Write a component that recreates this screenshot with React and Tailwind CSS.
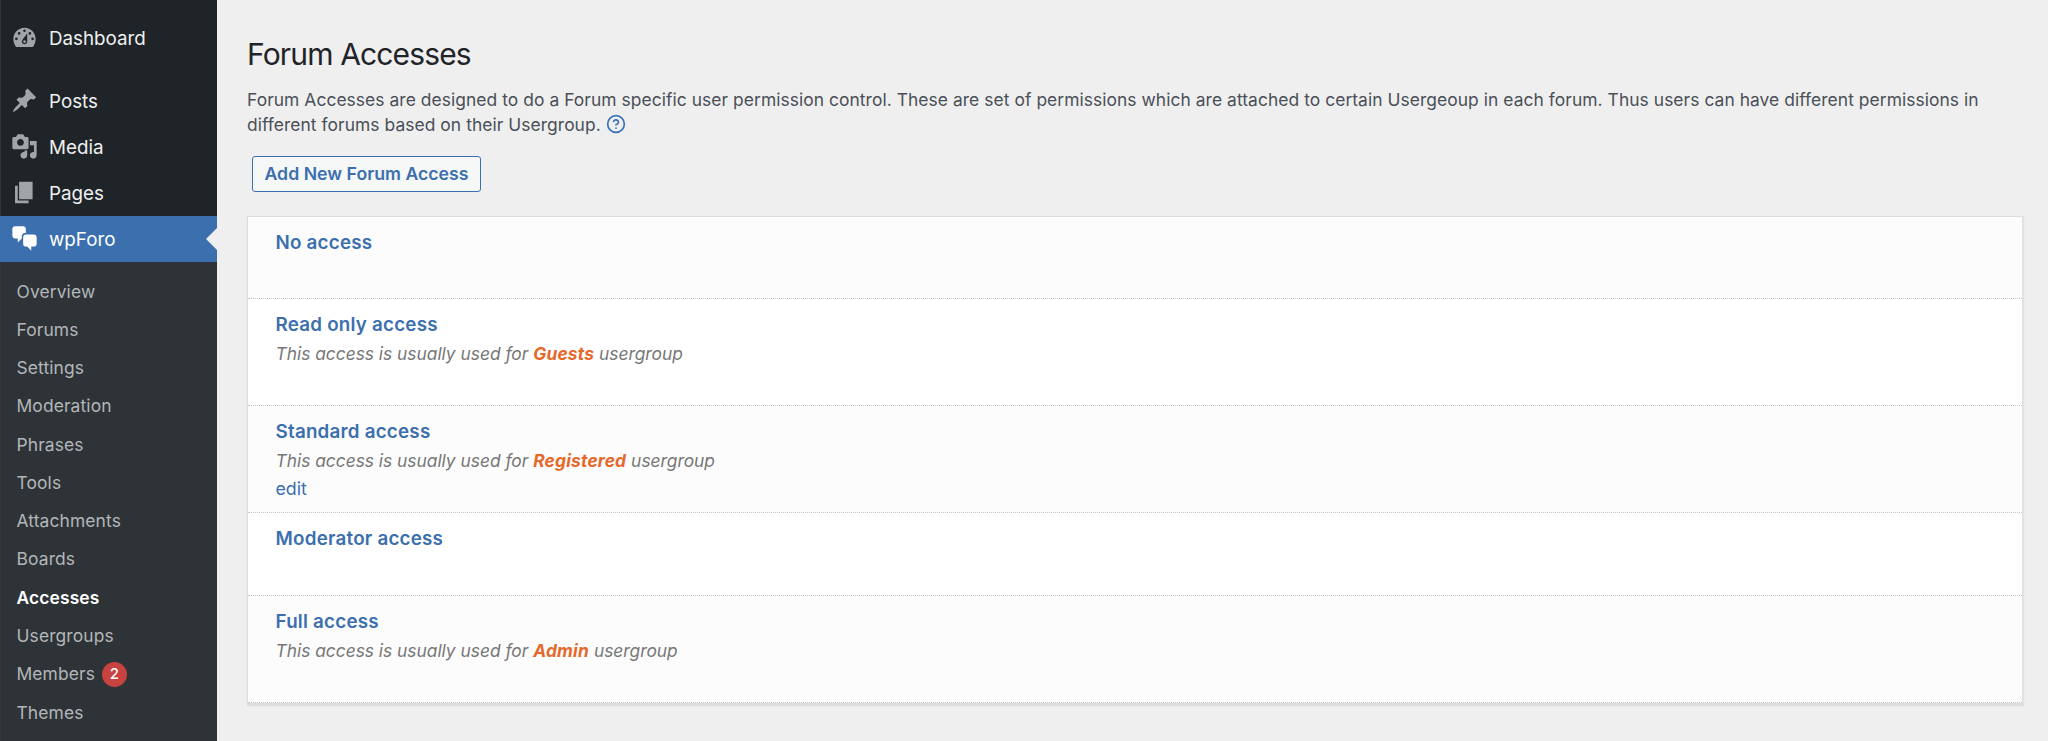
import React from 'react';
import { CircleHelp } from 'lucide-react';

const MENU = [
  {
    label: 'Posts',
    path: 'M10.44 3.02l1.82-1.82 6.36 6.35-1.83 1.82c-1.05-.68-2.48-.57-3.41.36l-.75.75c-.92.93-1.04 2.35-.35 3.41l-1.83 1.82-2.41-2.41-2.8 2.79c-.42.42-3.38 2.71-3.8 2.29s1.86-3.39 2.28-3.81l2.79-2.79L4.1 9.36l1.83-1.82c1.05.69 2.48.57 3.4-.36l.75-.75c.93-.92 1.05-2.35.36-3.41z',
  },
  {
    label: 'Media',
    path: 'M13 11V4c0-.55-.45-1-1-1h-1.67L9 1H5L3.67 3H2c-.55 0-1 .45-1 1v7c0 .55.45 1 1 1h10c.55 0 1-.45 1-1zM7 4.5c1.38 0 2.5 1.12 2.5 2.5S8.38 9.5 7 9.5 4.5 8.38 4.5 7 5.62 4.5 7 4.5zM14 6h5v10.5c0 1.38-1.12 2.5-2.5 2.5S14 17.88 14 16.5s1.12-2.5 2.5-2.5c.17 0 .34.02.5.05V9h-3V6zm-4 8.05V13h2v3.5c0 1.38-1.12 2.5-2.5 2.5S7 17.88 7 16.5 8.12 14 9.5 14c.17 0 .34.02.5.05z',
  },
  { label: 'Pages', path: 'M6 15V2h10v13H6zm-1 1h8v2H3V5h2v11z' },
];

const DASHBOARD =
  'M3.76 17h12.48c1.34-1.63 2.01-3.82 2.01-6 0-4.55-3.69-8.25-8.25-8.25S1.75 6.45 1.75 11c0 2.18.67 4.37 2.01 6zM10 4a1 1 0 110 2 1 1 0 010-2zM6 6a1 1 0 110 2 1 1 0 010-2zm8 0a1 1 0 110 2 1 1 0 010-2zm-5.37 5.55L12 7v6c0 1.1-.9 2-2 2s-2-.9-2-2c0-.57.24-1.08.63-1.45zM4 10a1 1 0 110 2 1 1 0 010-2zm12 0a1 1 0 110 2 1 1 0 010-2zm-6 2a1 1 0 110 2 1 1 0 010-2z';

const CHAT =
  'M11 6h-.82C9.07 6 8 7.2 8 8.16V10l-3 3v-3H3c-1.1 0-2-.9-2-2V3c0-1.1.9-2 2-2h6c1.1 0 2 .9 2 2v3zm0 1h6c1.1 0 2 .9 2 2v5c0 1.1-.9 2-2 2h-2v3l-3-3h-1c-1.1 0-2-.9-2-2V9c0-1.1.9-2 2-2z';

const SUBMENU = [
  { label: 'Overview' },
  { label: 'Forums' },
  { label: 'Settings' },
  { label: 'Moderation' },
  { label: 'Phrases' },
  { label: 'Tools' },
  { label: 'Attachments' },
  { label: 'Boards' },
  { label: 'Accesses', current: true },
  { label: 'Usergroups' },
  { label: 'Members', count: 2 },
  { label: 'Themes' },
];

const ACCESSES = [
  { name: 'No access', height: 'h-[82px]' },
  { name: 'Read only access', group: 'Guests', height: 'h-[107px]' },
  { name: 'Standard access', group: 'Registered', edit: true, height: 'h-[107px]' },
  { name: 'Moderator access', height: 'h-[83px]' },
  { name: 'Full access', group: 'Admin', height: 'h-[107px]' },
];

function MenuItem({ label, path, active }) {
  return (
    <a
      className={
        active
          ? 'relative -ml-px flex h-[46px] items-center bg-[#3b6fad] pl-[11px] text-white'
          : 'relative flex h-[46px] items-center pl-[10px] text-[#f0f0f1]'
      }
    >
      <svg
        viewBox="0 0 20 20"
        className={active ? 'mb-[1px] size-[27px] fill-white' : 'mb-[1px] size-[27px] fill-[#a1a5a9]'}
      >
        <path fillRule="evenodd" d={path} />
      </svg>
      <span className="pl-[11px] pt-[2px] text-[18.8px] leading-6">{label}</span>
      {active && (
        <span className="absolute right-0 top-[12px] border-y-[11px] border-r-[11px] border-y-transparent border-r-[#efefef]" />
      )}
    </a>
  );
}

function Sidebar() {
  return (
    <nav className="flex h-full w-[217px] shrink-0 flex-col border-l border-[#32373b] bg-[#1f2428]">
      <div className="pt-[15px]">
        <MenuItem label="Dashboard" path={DASHBOARD} />
      </div>
      <div className="pt-[17px]">
        {MENU.map((item) => (
          <MenuItem key={item.label} {...item} />
        ))}
        <MenuItem label="wpForo" path={CHAT} active />
      </div>
      <ul className="flex-1 bg-[#2e3337] pt-[10.5px] text-[17.4px] tracking-[0.13px] text-[#b3b6b9]">
        {SUBMENU.map(({ label, current, count }) => (
          <li key={label} className="flex h-[38.27px] items-center pl-[15.5px]">
            <span className={current ? 'font-semibold text-white' : ''}>{label}</span>
            {count && (
              <span className="ml-[7px] flex size-[25px] items-center justify-center rounded-full bg-[#c8433f] text-[15px] font-medium text-white">
                {count}
              </span>
            )}
          </li>
        ))}
      </ul>
    </nav>
  );
}

function AccessRow({ name, group, edit, height }) {
  return (
    <div
      className={`${height} box-border border-b border-dotted border-[#c6c6c6] bg-white pl-[27.5px] pt-[9.5px] odd:bg-[#fcfcfc]`}
    >
      <div className="text-[18.8px] font-semibold leading-[31px] tracking-[0.22px] text-[#3b6fad]">
        {name}
      </div>
      {group && (
        <p className="text-[17.35px] italic leading-[28px] text-[#777]">
          This access is usually used for{' '}
          <b className="font-bold tracking-[0.2px] text-[#e4692b]">{group}</b> usergroup
        </p>
      )}
      {edit && <a className="block text-[17.8px] leading-[28px] text-[#3b6fad]">edit</a>}
    </div>
  );
}

export default function App() {
  return (
    <div className="flex h-[741px] w-[2048px] overflow-hidden bg-[#efefef] font-['Inter',sans-serif]">
      <Sidebar />
      <main className="flex-1 pl-[30px] pr-[24px] pt-[34px]">
        <h1 className="text-[30px] leading-[40px] tracking-[-0.85px] text-[#1f2428]">Forum Accesses</h1>
        <p className="mt-[13px] whitespace-nowrap text-[17.4px] leading-[25px] tracking-[0.065px] text-[#4a4f58]">
          Forum Accesses are designed to do a Forum specific user permission control. These are set of
          permissions which are attached to certain Usergeoup in each forum. Thus users can have different
          permissions in
          <br />
          different forums based on their Usergroup.{' '}
          <CircleHelp className="inline size-5 align-[-3px] text-[#3b70b5]" />
        </p>
        <button className="ml-[5px] mt-[19px] flex h-[36px] w-[229px] items-center justify-center rounded-[3px] border border-[#3b6fad] bg-[#f6f7f7] text-[17.7px] font-semibold text-[#3b6fad]">
          Add New Forum Access
        </button>
        <section className="mt-[24px] border border-[#dcdcdc] border-r-2 border-r-[#e2e2e2] shadow-[0_2px_1px_rgba(0,0,0,0.07)]">
          {ACCESSES.map((access) => (
            <AccessRow key={access.name} {...access} />
          ))}
        </section>
      </main>
    </div>
  );
}
